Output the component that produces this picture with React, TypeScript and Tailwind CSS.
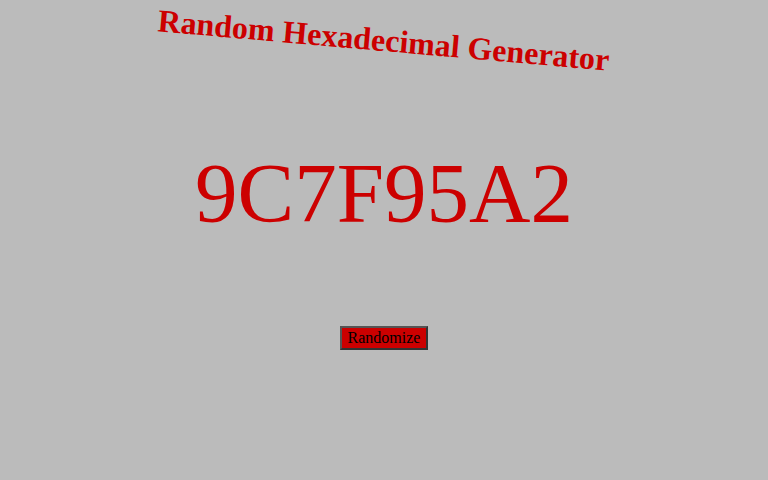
import { useState } from 'react';

const HEX = '0123456789ABCDEF';

function randomHex() {
  let s = '';
  for (let i = 0; i < 8; i++) s += HEX[Math.floor(Math.random() * 16)];
  return s;
}

export default function App() {
  const [value, setValue] = useState('9C7F95A2');

  return (
    <div className="min-h-screen w-full bg-[#bbbbbb] flex flex-col items-center font-['Liberation_Serif',serif] text-[#cc0000]">
      <h1 className="mt-[18px] h-[44px] text-[32px] leading-[44px] font-bold rotate-[5deg] whitespace-nowrap">
        Random Hexadecimal Generator
      </h1>
      <div className="mt-[76px] text-[85px] leading-[110px]">{value}</div>
      <button
        className="mt-[78px] h-[24px] px-[6px] bg-[#cc0000] text-[16px] leading-[18px] text-black border-2 border-[#333333] border-t-[#555555] border-l-[#555555]"
        onClick={() => setValue(randomHex())}
      >
        Randomize
      </button>
    </div>
  );
}
